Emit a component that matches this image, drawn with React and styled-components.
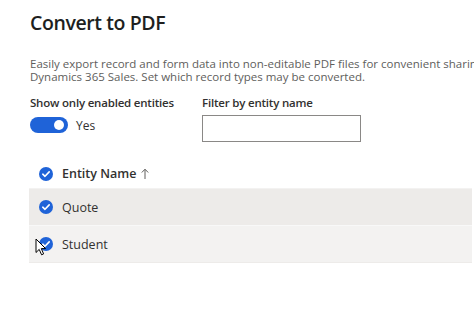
import React from 'react';
import styled, { createGlobalStyle } from 'styled-components';

const GlobalStyle = createGlobalStyle`
    html, body {
        margin: 0;
        padding: 0;
        background: #ffffff;
        overflow: hidden;
    }
    body {
        font-family: "Open Sans", "Noto Sans", "Liberation Sans", sans-serif;
        color: #323130;
    }
`

const Page = styled.div`
    padding: 9px 0 0 30px;
    width: 460px;
`

const Title = styled.h1`
    margin: 0;
    font-size: 19.5px;
    line-height: 28px;
    font-weight: 600;
    color: #201f1e;
    letter-spacing: -0.4px;
`

const Description = styled.p`
    margin: 20px 0 0;
    font-size: 11.5px;
    line-height: 13px;
    color: #605e5c;
    white-space: nowrap;
`

const Controls = styled.div`
    display: flex;
    gap: 24px;
    margin-top: 12px;
`

const Field = styled.div`
    display: flex;
    flex-direction: column;
    gap: 4px;
    width: ${p => p.width}px;
`

const Label = styled.label`
    font-size: 11.5px;
    line-height: 16px;
    font-weight: 600;
    color: #323130;
    white-space: nowrap;
    letter-spacing: -0.2px;
`

const ToggleRow = styled.div`
    display: flex;
    align-items: center;
    gap: 8px;
    height: 20px;
`

const Toggle = styled.div`
    width: 38px;
    height: 16px;
    border-radius: 8px;
    background: #1f63d8;
    display: flex;
    align-items: center;
    justify-content: flex-end;
    padding: 0 4px;
    box-sizing: border-box;
`

const Knob = styled.div`
    width: 10px;
    height: 10px;
    border-radius: 50%;
    background: #ffffff;
`

const ToggleText = styled.span`
    font-size: 12px;
    color: #323130;
`

const Input = styled.input`
    width: 159px;
    height: 27px;
    box-sizing: border-box;
    border: 1px solid #8a8886;
    border-radius: 0;
    background: #ffffff;
    margin: 0;
`

const Table = styled.div`
    margin-top: 17px;
    width: 443px;
    margin-left: -1px;
`

const Row = styled.div`
    display: flex;
    align-items: center;
    gap: 9px;
    height: ${p => (p.header ? 29 : 36)}px;
    padding-left: 10px;
    background: ${p => p.bg || 'transparent'};
    border-bottom: 1px solid ${p => (p.header ? '#f3f2f1' : p.bg === '#edebe9' ? '#f8f8f8' : '#edebe9')};
    font-size: 12.5px;
    color: #323130;
    position: relative;
`

const HeaderText = styled.span`
    font-weight: 600;
    display: flex;
    align-items: center;
    gap: 5px;
`

const Cursor = styled.svg`
    position: absolute;
    left: 6px;
    top: 12px;
`

const CheckCircle = () => (
    <svg width="14" height="14" viewBox="0 0 14 14">
        <circle cx="7" cy="7" r="7" fill="#1f63d8" />
        <path d="M3.8 7.2 L6 9.3 L10.2 4.9" stroke="#ffffff" strokeWidth="1.6" fill="none" strokeLinecap="round" strokeLinejoin="round" />
    </svg>
)

const UpArrow = () => (
    <svg width="8" height="12" viewBox="0 0 8 12">
        <path d="M4 11 V1.5 M0.8 4.5 L4 1.2 L7.2 4.5" stroke="#605e5c" strokeWidth="1" fill="none" />
    </svg>
)

const App = function(){
    return(
    <>
        <GlobalStyle />
        <Page>
            <Title>Convert to PDF</Title>
            <Description>
                Easily export record and form data into non-editable PDF files for convenient sharing with customers in<br />
                Dynamics 365 Sales. Set which record types may be converted.
            </Description>
            <Controls>
                <Field width={148}>
                    <Label>Show only enabled entities</Label>
                    <ToggleRow>
                        <Toggle><Knob /></Toggle>
                        <ToggleText>Yes</ToggleText>
                    </ToggleRow>
                </Field>
                <Field width={160}>
                    <Label>Filter by entity name</Label>
                    <Input type="text" />
                </Field>
            </Controls>
            <Table>
                <Row header>
                    <CheckCircle />
                    <HeaderText>Entity Name <UpArrow /></HeaderText>
                </Row>
                <Row bg="#edebe9">
                    <CheckCircle />
                    <span>Quote</span>
                </Row>
                <Row bg="#f3f2f1">
                    <CheckCircle />
                    <span>Student</span>
                    <Cursor width="12" height="18" viewBox="0 0 12 18">
                        <path d="M1 1 L1 14.5 L4.2 11.4 L6.6 16.8 L8.6 15.9 L6.3 10.6 L10.6 10.6 Z" fill="#ffffff" stroke="#000000" strokeWidth="1" strokeLinejoin="round" />
                    </Cursor>
                </Row>
            </Table>
        </Page>
    </>
    );
}

export default App;
